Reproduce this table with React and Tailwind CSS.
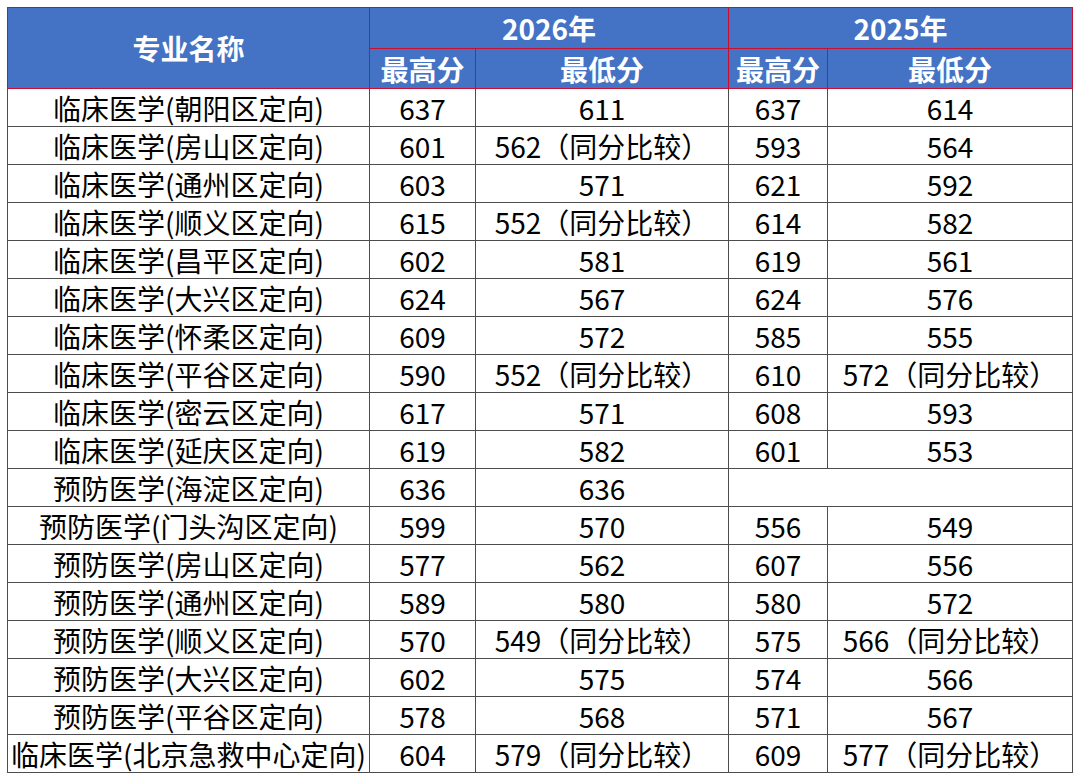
const rows = [
  ['临床医学(朝阳区定向)', '637', '611', '637', '614'],
  ['临床医学(房山区定向)', '601', '562（同分比较）', '593', '564'],
  ['临床医学(通州区定向)', '603', '571', '621', '592'],
  ['临床医学(顺义区定向)', '615', '552（同分比较）', '614', '582'],
  ['临床医学(昌平区定向)', '602', '581', '619', '561'],
  ['临床医学(大兴区定向)', '624', '567', '624', '576'],
  ['临床医学(怀柔区定向)', '609', '572', '585', '555'],
  ['临床医学(平谷区定向)', '590', '552（同分比较）', '610', '572（同分比较）'],
  ['临床医学(密云区定向)', '617', '571', '608', '593'],
  ['临床医学(延庆区定向)', '619', '582', '601', '553'],
  ['预防医学(海淀区定向)', '636', '636', null, null],
  ['预防医学(门头沟区定向)', '599', '570', '556', '549'],
  ['预防医学(房山区定向)', '577', '562', '607', '556'],
  ['预防医学(通州区定向)', '589', '580', '580', '572'],
  ['预防医学(顺义区定向)', '570', '549（同分比较）', '575', '566（同分比较）'],
  ['预防医学(大兴区定向)', '602', '575', '574', '566'],
  ['预防医学(平谷区定向)', '578', '568', '571', '567'],
  ['临床医学(北京急救中心定向)', '604', '579（同分比较）', '609', '577（同分比较）'],
]

const th = 'border border-[#c8102e] bg-[#4472c4] text-white font-bold text-[28px] text-center p-0 leading-none'
const td = 'border border-[#4d4d4d] text-[28px] text-center text-black p-0 leading-none whitespace-nowrap'

export default function App() {
  return (
    <div
      className="w-[1080px] h-[783px] bg-white pt-[7px] pl-[7px]"
      style={{ fontFamily: '"Noto Sans CJK SC", "Noto Sans", sans-serif' }}
    >
      <table className="border-collapse table-fixed w-[1065px]">
        <colgroup>
          <col className="w-[362px]" />
          <col className="w-[106px]" />
          <col className="w-[253px]" />
          <col className="w-[99px]" />
          <col className="w-[245px]" />
        </colgroup>
        <thead>
          <tr className="h-[41px]">
            <th rowSpan={2} className={th}>专业名称</th>
            <th colSpan={2} className={th}>2026年</th>
            <th colSpan={2} className={th}>2025年</th>
          </tr>
          <tr className="h-[40px]">
            <th className={th}>最高分</th>
            <th className={th}>最低分</th>
            <th className={th}>最高分</th>
            <th className={th}>最低分</th>
          </tr>
        </thead>
        <tbody>
          {rows.map((r, i) => (
            <tr key={i} className="h-[38px]">
              <td className={td}>{r[0]}</td>
              <td className={td}>{r[1]}</td>
              <td className={td}>{r[2]}</td>
              {r[3] === null ? (
                <td colSpan={2} className={td}></td>
              ) : (
                <>
                  <td className={td}>{r[3]}</td>
                  <td className={td}>{r[4]}</td>
                </>
              )}
            </tr>
          ))}
        </tbody>
      </table>
    </div>
  )
}
